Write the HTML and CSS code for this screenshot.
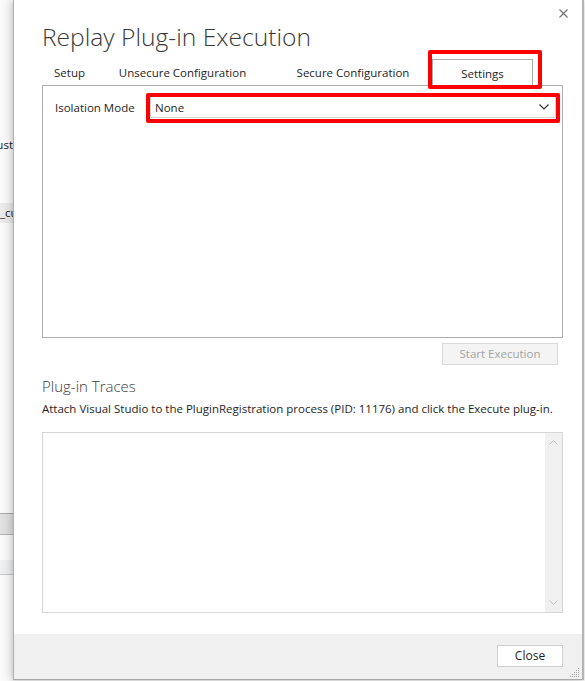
FILE: index.html
```html
<!DOCTYPE html>
<html>
<head>
<meta charset="utf-8">
<link rel="stylesheet" href="styles.css">
</head>
<body>
<div class="desktop">
  <div class="bg-row bg-text1"><span>Must</span></div>
  <div class="bg-row bg-band1"><span class="left">_customer</span></div>
  <div class="bg-row bg-band2"></div>
  <div class="bg-row bg-band3"></div>
</div>

<div class="dialog">
  <div class="close-x">
    <svg width="9" height="9" viewBox="0 0 9 9"><path d="M0.5 0.5 L8.5 8.5 M8.5 0.5 L0.5 8.5" stroke="#6f6f6f" stroke-width="1.1" fill="none"/></svg>
  </div>
  <div class="content">
    <h1 class="title">Replay Plug-in Execution</h1>
    <div class="tabs">
      <div class="tab t1">Setup</div>
      <div class="tab t2">Unsecure Configuration</div>
      <div class="tab t3">Secure Configuration</div>
      <div class="tab t4 selected">Settings<div class="hl hl-tab"></div></div>
    </div>
    <div class="panel">
      <div class="row">
        <div class="label">Isolation Mode</div>
        <div class="select">
          <span>None</span>
          <svg class="chev" width="10" height="6" viewBox="0 0 10 6"><path d="M0.5 0.5 L5 5 L9.5 0.5" stroke="#333" stroke-width="1.1" fill="none"/></svg>
          <div class="hl hl-select"></div>
        </div>
      </div>
    </div>
    <div class="actions">
      <div class="btn disabled">Start Execution</div>
    </div>
    <div class="section-title">Plug-in Traces</div>
    <div class="hint">Attach Visual Studio to the PluginRegistration process (PID: 11176) and click the Execute plug-in.</div>
    <div class="traces">
      <div class="traces-text"></div>
      <div class="scrollbar">
        <svg width="9" height="5" viewBox="0 0 9 5"><path d="M0.5 4.5 L4.5 0.5 L8.5 4.5" stroke="#c2c2c2" stroke-width="1" fill="none"/></svg>
        <svg width="9" height="5" viewBox="0 0 9 5"><path d="M0.5 0.5 L4.5 4.5 L8.5 0.5" stroke="#c2c2c2" stroke-width="1" fill="none"/></svg>
      </div>
    </div>
  </div>
  <div class="footer">
    <div class="btn close">Close</div>
    <svg class="grip" width="12" height="12" viewBox="0 0 12 12" fill="#a8a8a8">
      <rect x="10" y="2" width="1" height="1"/>
      <rect x="8" y="4" width="1" height="1"/><rect x="10" y="4" width="1" height="1"/>
      <rect x="6" y="6" width="1" height="1"/><rect x="8" y="6" width="1" height="1"/><rect x="10" y="6" width="1" height="1"/>
      <rect x="4" y="8" width="1" height="1"/><rect x="6" y="8" width="1" height="1"/><rect x="8" y="8" width="1" height="1"/><rect x="10" y="8" width="1" height="1"/>
      <rect x="2" y="10" width="1" height="1"/><rect x="4" y="10" width="1" height="1"/><rect x="6" y="10" width="1" height="1"/><rect x="8" y="10" width="1" height="1"/><rect x="10" y="10" width="1" height="1"/>
    </svg>
  </div>
</div>
</body>
</html>
```

FILE: styles.css
```css
* { box-sizing: border-box; }
html, body { margin: 0; padding: 0; }
body {
  width: 585px;
  height: 681px;
  overflow: hidden;
  position: relative;
  background: #fbfbfb;
  font-family: "Open Sans", "Noto Sans", sans-serif;
  font-size: 11.5px;
  color: #1e1e1e;
}

.desktop {
  display: flex;
  flex-direction: column;
  width: 100%;
}
.bg-row {
  display: flex;
  justify-content: flex-end;
  width: 13px;
  overflow: hidden;
  white-space: nowrap;
}
.bg-text1 { margin-top: 136px; height: 18px; line-height: 18px; color: #222; }
.bg-band1 {
  margin-top: 49px;
  height: 20px;
  line-height: 20px;
  background: #ececec;
  justify-content: flex-start;
  color: #222;
}
.bg-band2 {
  margin-top: 290px;
  height: 22px;
  background: #e1e1e1;
  border-top: 1px solid #a9a9a9;
  border-bottom: 1px solid #b4b4b4;
}
.bg-band3 {
  margin-top: 25px;
  height: 15px;
  background: #eef0f2;
  border-bottom: 1px solid #c9c9c9;
}

.dialog {
  position: absolute;
  left: 13px;
  top: 0;
  width: 571px;
  height: 680px;
  background: #fff;
  border-left: 1px solid #b0b0b0;
  border-right: 2px solid #b4b4b4;
  border-bottom: 1px solid #a8a8a8;
  box-shadow: -3px 0 9px rgba(0, 0, 0, 0.16), 0 2px 4px rgba(0,0,0,0.1);
  display: flex;
  flex-direction: column;
}

.close-x {
  position: absolute;
  top: 9px;
  right: 14px;
  width: 9px;
  height: 9px;
  display: flex;
}

.content {
  flex: 1;
  padding: 0 19px 0 28px;
  display: flex;
  flex-direction: column;
}

.title {
  margin: 22px 0 0;
  font-weight: 300;
  font-size: 24.6px;
  line-height: 30px;
  height: 30px;
  color: #3a3a3a;
  letter-spacing: 0;
}

.tabs {
  display: flex;
  align-items: flex-end;
  height: 33px;
}
.tab {
  height: 26px;
  line-height: 27px;
  text-align: center;
  white-space: nowrap;
  color: #1e1e1e;
  position: relative;
}
.t1 { margin-left: 6px; width: 43px; }
.t2 { width: 183px; }
.t3 { width: 158px; }
.t4 { width: 101px; }
.tab.selected {
  background: #fff;
  border: 1px solid #acacac;
  border-bottom: none;
  height: 27px;
  margin-bottom: -1px;
  z-index: 1;
  line-height: 27px;
}

.hl {
  position: absolute;
  border: 4px solid #ff0000;
  border-radius: 2px;
  pointer-events: none;
}
.hl-tab { left: -5px; top: -10px; right: -10px; bottom: -3px; }
.hl-select { left: -5px; top: -4px; right: -5px; bottom: -6px; }

.panel {
  height: 253px;
  border: 1px solid #acacac;
  display: flex;
  flex-direction: column;
}
.row {
  display: flex;
  align-items: center;
  margin-top: 10px;
  padding: 0 6px 0 12px;
}
.label { width: 95px; white-space: nowrap; color: #1e1e1e; }
.select {
  flex: 1;
  height: 22px;
  border: 1px solid #d4d4d4;
  background: #fff;
  display: flex;
  align-items: center;
  justify-content: space-between;
  padding: 0 6px 0 4px;
  position: relative;
}
.chev { display: block; }

.actions {
  display: flex;
  justify-content: flex-end;
  padding-right: 5px;
  margin-top: 5px;
}
.btn {
  height: 22px;
  line-height: 20px;
  text-align: center;
  border: 1px solid #adadad;
  background: #fff;
}
.btn.disabled {
  width: 116px;
  background: #f4f4f4;
  border-color: #d9d9d9;
  color: #a3a3a3;
}

.section-title {
  margin-top: 11px;
  font-weight: 300;
  font-size: 15px;
  line-height: 20px;
  color: #3a3a3a;
}
.hint {
  margin-top: 5px;
  line-height: 16px;
  white-space: nowrap;
  font-size: 11.5px;
  color: #1e1e1e;
}
.traces {
  margin-top: 15px;
  height: 181px;
  border: 1px solid #d6d6d6;
  display: flex;
}
.traces-text { flex: 1; }
.scrollbar {
  width: 17px;
  background: #f0f0f0;
  display: flex;
  flex-direction: column;
  align-items: center;
  justify-content: space-between;
  padding: 7px 0 7px;
}
.scrollbar svg { display: block; }

.footer {
  height: 45px;
  background: #f0f0f0;
  display: flex;
  justify-content: flex-end;
  align-items: flex-start;
  padding: 11px 19px 0 0;
  position: relative;
}
.btn.close {
  width: 66px;
  border-color: #cfcfcf;
  background: #fff;
  color: #1e1e1e;
  font-size: 12px;
}
.grip {
  position: absolute;
  right: 2px;
  bottom: 1px;
}
```
